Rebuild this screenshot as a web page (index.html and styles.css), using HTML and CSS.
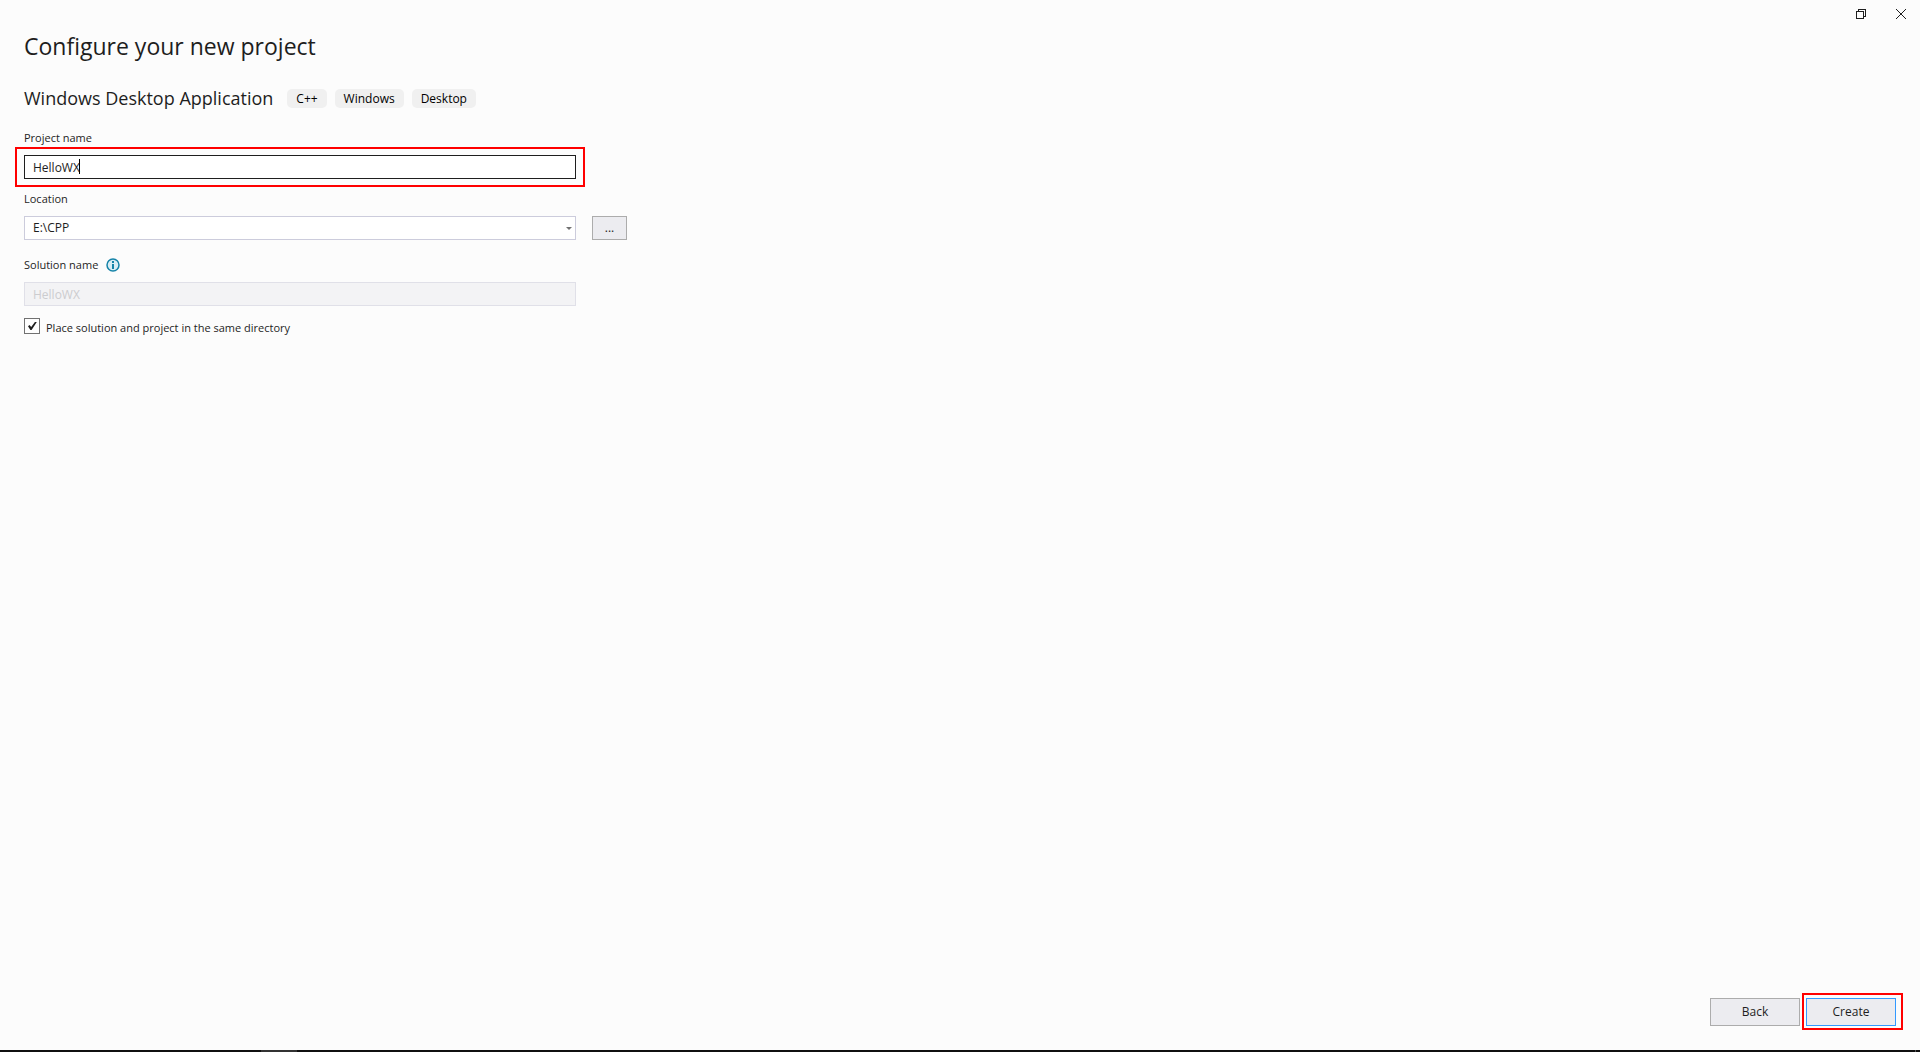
FILE: index.html
```html
<!DOCTYPE html>
<html lang="en">
<head>
    <meta charset="UTF-8">
    <meta name="viewport" content="width=device-width, initial-scale=1.0">
    <title>Configure your new project</title>
    <link rel="stylesheet" href="styles.css">
</head>
<body>
    <header class="titlebar">
        <button type="button" class="window-btn" aria-label="Restore">
            <svg width="10" height="10" viewBox="0 0 10 10" fill="none" stroke="#1e1e1e" shape-rendering="crispEdges">
                <path d="M0.5 2.5h7v7h-7z M2.5 2.5v-2h7v7h-2" />
            </svg>
        </button>
        <button type="button" class="window-btn" aria-label="Close">
            <svg width="10" height="10" viewBox="0 0 10 10" fill="none" stroke="#1e1e1e">
                <path d="M0 0l10 10M10 0L0 10" />
            </svg>
        </button>
    </header>

    <form class="dialog">
        <main class="content">
            <h1>Configure your new project</h1>

            <div class="template">
                <h2>Windows Desktop Application</h2>
                <ul class="tags">
                    <li>C++</li>
                    <li>Windows</li>
                    <li>Desktop</li>
                </ul>
            </div>

            <div class="field">
                <label for="projectName">Project name</label>
                <div class="input-wrap">
                    <input type="text" id="projectName" class="input-box active" value="HelloWX">
                    <span class="caret"></span>
                    <span class="highlight"></span>
                </div>
            </div>

            <div class="field location">
                <label for="location">Location</label>
                <div class="location-row">
                    <div class="input-wrap">
                        <select id="location" class="input-box">
                            <option>E:\CPP</option>
                        </select>
                        <span class="arrow"></span>
                    </div>
                    <button type="button" class="btn browse" aria-label="Browse">...</button>
                </div>
            </div>

            <div class="field">
                <label for="solutionName">Solution name
                    <svg width="14" height="14" viewBox="0 0 14 14">
                        <circle cx="7" cy="7" r="6" fill="#d9edf4" stroke="#1583a8" stroke-width="1.5" />
                        <path d="M6 3h2v2H6zM6 6h2v5H6z" fill="#1583a8" />
                    </svg>
                </label>
                <div class="input-wrap">
                    <input type="text" id="solutionName" class="input-box" value="HelloWX" disabled>
                </div>
            </div>

            <div class="check-row">
                <input type="checkbox" id="sameDir" checked>
                <svg class="tick" width="16" height="16" viewBox="0 0 16 16">
                    <path d="M4 8.2l1.5-1.1 1.7 1.9 3.7-5 1.9 0L7.6 12H6.4z" fill="#1e1e1e" />
                </svg>
                <label for="sameDir">Place solution and project in the same directory</label>
            </div>
        </main>

        <footer class="actions">
            <button type="button" class="btn">Back</button>
            <div class="create-wrap">
                <button type="button" class="btn primary">Create</button>
                <span class="highlight"></span>
            </div>
        </footer>
    </form>

    <div class="taskbar">
        <span class="task"></span>
        <span class="show-desktop"></span>
    </div>
</body>
</html>
```
FILE: styles.css
```css
* {
    box-sizing: border-box;
    padding: 0;
    margin: 0;
}

body {
    display: flex;
    flex-direction: column;
    min-height: 100vh;
    background-color: #fcfcfc;
    color: #1e1e1e;
    font-family: "Open Sans", "Noto Sans", sans-serif;
    font-size: 12px;
    line-height: 16px;
}

input,
select,
button {
    font: inherit;
    color: inherit;
}

/* Window buttons */
.titlebar {
    display: flex;
    justify-content: flex-end;
    height: 28px;
    margin-right: -1px;
    overflow: hidden;
}

.window-btn {
    display: flex;
    justify-content: center;
    align-items: center;
    width: 40px;
    height: 28px;
    border: none;
    background: none;
}

.dialog {
    display: flex;
    flex: 1;
    flex-direction: column;
    justify-content: space-between;
    padding: 0 24px 24px;
}

h1 {
    font-size: 23px;
    font-weight: 400;
    line-height: 36px;
}

.template {
    display: flex;
    align-items: center;
    gap: 14px;
    margin: 20px 0 18px;
}

h2 {
    font-size: 18px;
    font-weight: 400;
    line-height: 28px;
}

.tags {
    display: flex;
    gap: 8px;
    list-style: none;
}

.tags li {
    padding: 2px 9px;
    border-radius: 5px;
    background-color: #f0f0f0;
    color: #000;
    line-height: 15px;
}

/* Form fields */
.field {
    max-width: 552px;
    margin-bottom: 12px;
}

.field label {
    display: flex;
    align-items: center;
    gap: 8px;
    height: 16px;
    margin-bottom: 9px;
    font-size: 11px;
}

.input-wrap {
    position: relative;
    flex: 1;
}

.input-box {
    display: block;
    width: 100%;
    height: 24px;
    padding: 0 8px;
    border: 1px solid #ccccdc;
    border-radius: 0;
    outline: none;
    background-color: #fff;
    appearance: none;
}

.input-box.active {
    border-color: #1e1e1e;
}

.input-box:disabled {
    border-color: #e0e0e8;
    background-color: #f3f3f5;
    color: #cccccf;
}

.caret {
    position: absolute;
    top: 4px;
    left: 55px;
    width: 1px;
    height: 15px;
    background-color: #000;
}

.arrow {
    position: absolute;
    top: 11px;
    right: 4px;
    border: 3px solid transparent;
    border-top-color: #717171;
    border-bottom: none;
}

.location {
    max-width: 603px;
    margin-bottom: 17px;
}

.location-row {
    display: flex;
    gap: 16px;
}

.check-row {
    position: relative;
    display: flex;
    gap: 6px;
}

.check-row input {
    width: 16px;
    height: 16px;
    border: 1px solid #717171;
    background-color: #fefefe;
    appearance: none;
}

.check-row label {
    padding-top: 2px;
    font-size: 11px;
}

.tick {
    position: absolute;
    top: 0;
    left: 0;
    pointer-events: none;
}

/* Buttons */
.btn {
    width: 90px;
    height: 28px;
    border: 1px solid #acacac;
    background-color: #ececf0;
}

.btn.primary {
    border-color: #3399ff;
}

.btn.browse {
    width: 35px;
    height: 24px;
}

.actions {
    display: flex;
    justify-content: flex-end;
    gap: 6px;
}

.create-wrap {
    position: relative;
}

/* Red frames over the parts to fill in and press */
.highlight {
    position: absolute;
    inset: -8px -9px;
    border: 2px solid #f00;
    pointer-events: none;
}

.create-wrap .highlight {
    inset: -5px -7px -4px -4px;
}

/* Top edge of the taskbar */
.taskbar {
    display: flex;
    justify-content: space-between;
    height: 2px;
    padding: 0 4px 0 261px;
    background-color: #101010;
}

.task {
    width: 36px;
    background-color: #333;
}

.show-desktop {
    width: 1px;
    background-color: #555;
}
```
